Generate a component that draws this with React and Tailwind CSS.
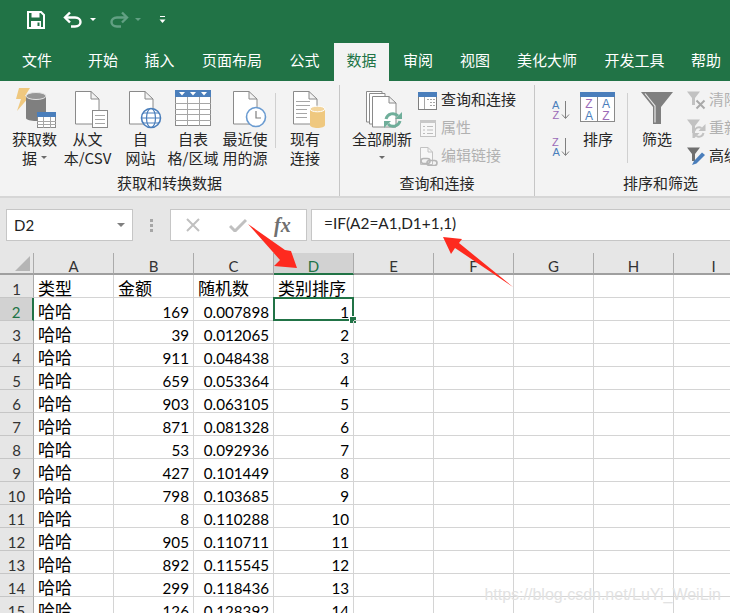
import React from 'react';

const BLUE = '#4a7ebb';

const rows = [
    ['169', '0.007898', '1'],
    ['39', '0.012065', '2'],
    ['911', '0.048438', '3'],
    ['659', '0.053364', '4'],
    ['903', '0.063105', '5'],
    ['871', '0.081328', '6'],
    ['53', '0.092936', '7'],
    ['427', '0.101449', '8'],
    ['798', '0.103685', '9'],
    ['8', '0.110288', '10'],
    ['905', '0.110711', '11'],
    ['892', '0.115545', '12'],
    ['299', '0.118436', '13'],
    ['126', '0.128392', '14'],
];

const tabs = [
    ['文件', 'w-[56px] ml-[9px]'],
    ['开始', 'w-[56px] ml-[10px]'],
    ['插入', 'w-[57px]'],
    ['页面布局', 'w-[88px]'],
    ['公式', 'w-[57px]'],
    ['数据', 'w-[55px] ml-[1px] bg-[#f3f3f3] text-[#217346]'],
    ['审阅', 'w-[58px]'],
    ['视图', 'w-[56px]'],
    ['美化大师', 'w-[88px]'],
    ['开发工具', 'w-[87px]'],
    ['帮助', 'w-[56px]'],
];

// white page with folded corner, x/y are the top left
const Doc = ({ x, y, w = 24, h = 33, fold = 8 }) => (
    <path
        d={`M${x + 0.5} ${y + 0.5}H${x + w - fold}L${x + w} ${y + fold}V${y + h}H${x + 0.5}ZM${x + w - fold} ${y + 0.5}V${y + fold}H${x + w}`}
        fill="#fff"
        stroke="#8a8a8a"
    />
);

const MiniTable = ({ x, y, w, h, head = 5, color = BLUE, cols = 3, lines = 3 }) => (
    <g>
        <rect x={x + 0.5} y={y + 0.5} width={w - 1} height={h - 1} fill="#fff" stroke="#8a8a8a" />
        <rect x={x} y={y} width={w} height={head} fill={color} />
        {Array.from({ length: cols - 1 }, (_, i) => (
            <path key={i} d={`M${x + Math.round(((i + 1) * w) / cols) + 0.5} ${y + head}V${y + h}`} stroke="#a6a6a6" />
        ))}
        {Array.from({ length: lines - 1 }, (_, i) => (
            <path key={i} d={`M${x} ${y + head + Math.round(((i + 1) * (h - head)) / lines) + 0.5}H${x + w}`} stroke="#a6a6a6" />
        ))}
    </g>
);

const Svg44 = ({ children }) => (
    <svg width="44" height="44" viewBox="0 0 44 44">
        {children}
    </svg>
);

const GetDataIcon = () => (
    <Svg44>
        <path d="M6 2H17L12 10H17L4 25L8 13H3Z" fill="#efc87f" />
        <path d="M13 10V32C13 36 33 36 33 32V10Z" fill="#7f7f7f" />
        <ellipse cx="23" cy="10" rx="10" ry="3.5" fill="#969696" stroke="#e6e6e6" />
        <MiniTable x={24} y={26} w={19} h={16} head={5} cols={3} lines={3} />
    </Svg44>
);

const TextDocIcon = () => (
    <Svg44>
        <Doc x={9} y={5} />
        <rect x="26.5" y="24.5" width="15" height="17" fill="#fff" stroke="#8a8a8a" />
        <path d="M29 29.5H39M29 33.5H39M29 37.5H39" stroke="#a6a6a6" />
    </Svg44>
);

const WebIcon = () => (
    <Svg44>
        <Doc x={10} y={5} />
        <circle cx="32" cy="32" r="9.5" fill="#fff" stroke={BLUE} strokeWidth="1.6" />
        <ellipse cx="32" cy="32" rx="4.5" ry="9.5" fill="none" stroke={BLUE} strokeWidth="1.2" />
        <path d="M22.5 32H41.5M24 27H40M24 37H40" stroke={BLUE} strokeWidth="1.2" />
    </Svg44>
);

const TableIcon = () => (
    <Svg44>
        <MiniTable x={4} y={4} w={36} h={36} head={7} cols={3} lines={5} />
        <path d="M8 6H14L11 9.5ZM19 6H25L22 9.5ZM30 6H36L33 9.5Z" fill="#fff" />
    </Svg44>
);

const RecentIcon = () => (
    <Svg44>
        <Doc x={10} y={5} />
        <circle cx="33" cy="31" r="9.5" fill="#fff" stroke="#6a9bd1" strokeWidth="1.6" />
        <path d="M33 25V32H38" fill="none" stroke="#7f7f7f" strokeWidth="1.2" />
    </Svg44>
);

const ExistingIcon = () => (
    <Svg44>
        <Doc x={10} y={5} />
        <path d="M13 15.5H27M13 19.5H27M13 23.5H24M13 27.5H24M13 31.5H24" stroke="#a6a6a6" />
        <path d="M27 23V39C27 43 42 43 42 39V23Z" fill="#efc87f" />
        <ellipse cx="34.5" cy="23" rx="7.5" ry="2.8" fill="#f3d59c" stroke="#fff" />
    </Svg44>
);

const RefreshArrows = ({ cx, cy, color, r = 7 }) => (
    <g fill="none" stroke={color} strokeWidth={r > 6 ? 3 : 2}>
        <path d={`M${cx - r} ${cy - 1}A${r} ${r} 0 0 1 ${cx + r - 2} ${cy - 4}`} />
        <path d={`M${cx + r} ${cy + 1}A${r} ${r} 0 0 1 ${cx - r + 2} ${cy + 4}`} />
        <path d={`M${cx + r + 2} ${cy - 8}V${cy - 1}H${cx + r - 5}Z`} fill={color} stroke="none" />
        <path d={`M${cx - r - 2} ${cy + 8}V${cy + 1}H${cx - r + 5}Z`} fill={color} stroke="none" />
    </g>
);

const RefreshAllIcon = () => (
    <Svg44>
        <path d="M6.5 5.5H22V36H6.5Z" fill="#fff" stroke="#8a8a8a" />
        <path d="M9.5 7.5H25V38H9.5Z" fill="#fff" stroke="#8a8a8a" />
        <Doc x={12} y={10} w={24} h={31} fold={7} />
        <RefreshArrows cx={33} cy={34} color="#6fae9a" r={7} />
    </Svg44>
);

const SmallSvg = ({ children }) => (
    <svg width="20" height="20" viewBox="0 0 20 20" className="shrink-0">
        {children}
    </svg>
);

const QueryIcon = () => (
    <SmallSvg>
        <rect x="0.5" y="2.5" width="18" height="17" fill="#fff" stroke="#7f7f7f" />
        <rect x="0" y="2" width="19" height="5" fill={BLUE} />
        <path d="M9 9.5H17M12 12.5H17M12 15.5H17" stroke="#a6a6a6" strokeDasharray="2 1" />
        <path d="M6.5 7V19" stroke="#a6a6a6" />
    </SmallSvg>
);

const PropsIcon = () => (
    <SmallSvg>
        <rect x="2.5" y="2.5" width="15" height="16" fill="#f7f7f7" stroke="#c2c2c2" />
        <rect x="2" y="2" width="16" height="3" fill="#c8c8c8" />
        <path d="M5 8.5H7M5 12H7M5 15.5H7M9 8.5H15M9 12H15M9 15.5H15" stroke="#bdbdbd" />
    </SmallSvg>
);

const EditLinkIcon = () => (
    <SmallSvg>
        <path d="M2.5 1.5H10L14.5 6V18.5H2.5Z" fill="#f7f7f7" stroke="#c2c2c2" />
        <path d="M10 1.5V6H14.5" fill="none" stroke="#c2c2c2" />
        <rect x="3" y="12.5" width="9" height="5" rx="2.5" fill="#f3f3f3" stroke="#b5b5b5" strokeWidth="1.6" />
        <rect x="9" y="14.5" width="10" height="5" rx="2.5" fill="none" stroke="#b5b5b5" strokeWidth="1.6" />
    </SmallSvg>
);

const SortSmall = ({ top, bottom, topColor, bottomColor }) => (
    <svg width="18" height="20" viewBox="0 0 18 20">
        <text x="0" y="9" fontSize="11" fontWeight="500" fontFamily="Liberation Sans" fill={topColor}>{top}</text>
        <text x="0.5" y="19" fontSize="11" fontWeight="500" fontFamily="Liberation Sans" fill={bottomColor}>{bottom}</text>
        <path d="M13.5 1V18M10 14.5L13.5 18.5L17 14.5" fill="none" stroke="#7f7f7f" />
    </svg>
);

const SortIcon = () => (
    <Svg44>
        <rect x="4.5" y="6.5" width="34" height="29" fill="#fff" stroke="#8a8a8a" />
        <rect x="4" y="6" width="35" height="5" fill={BLUE} />
        <path d="M21.5 11V36" stroke="#8a8a8a" />
        <g fontSize="12" fontFamily="Liberation Sans" textAnchor="middle">
            <text x="13" y="22" fill="#9b6bb8">Z</text>
            <text x="13" y="33.5" fill={BLUE}>A</text>
            <text x="30" y="22" fill={BLUE}>A</text>
            <text x="30" y="33.5" fill="#9b6bb8">Z</text>
        </g>
    </Svg44>
);

const FilterIcon = () => (
    <Svg44>
        <path d="M6 6H38L26 21V38H18V21Z" fill="#7f7f7f" />
        <path d="M10 7.5L20 20V36.5" fill="none" stroke="#e8e8e8" strokeWidth="1.2" />
    </Svg44>
);

const SmallFunnel = ({ color }) => (
    <path d="M1 1.5H14L9 8V15H6V8Z" fill={color} />
);

const ClearIcon = () => (
    <SmallSvg>
        <SmallFunnel color="#c2c2c2" />
        <path d="M10.5 10.5L18.5 18.5M18.5 10.5L10.5 18.5" stroke="#a9a9a9" strokeWidth="2" />
    </SmallSvg>
);

const ReapplyIcon = () => (
    <SmallSvg>
        <SmallFunnel color="#c2c2c2" />
        <RefreshArrows cx={13} cy={14} color="#c2c2c2" r={4.5} />
    </SmallSvg>
);

const AdvancedIcon = () => (
    <SmallSvg>
        <SmallFunnel color="#6f6f6f" />
        <path d="M6 19L8 15L16 6.5L19 9L10.5 17.5Z" fill={BLUE} />
    </SmallSvg>
);

const Caret = ({ className = '' }) => (
    <span className={`inline-block w-0 h-0 border-x-[3px] border-x-transparent border-t-[3px] border-t-[#6a6a6a] ${className}`} />
);

const BigButton = ({ icon, first, second, width, caret }) => (
    <div className={`flex flex-col items-center shrink-0 ${width}`}>
        <div className="h-[44px] w-[44px]">{icon}</div>
        <div className="whitespace-nowrap -mt-[1px]">{first}</div>
        <div className="h-[19px] flex items-center gap-[4px] whitespace-nowrap">
            {second}
            {caret && <Caret />}
        </div>
    </div>
);

const SmallButton = ({ icon, label, disabled }) => (
    <div className={`h-[28px] flex items-center gap-[3px] whitespace-nowrap ${disabled ? 'text-[#b1b1b1]' : ''}`}>
        {icon}
        <span className="-mt-[3px]">{label}</span>
    </div>
);

const Group = ({ label, width, border = true, children }) => (
    <div className={`flex flex-col shrink-0 h-[111px] mt-[4px] ${width} ${border ? 'border-r border-[#c6c6c6]' : ''}`}>
        <div className="h-[88px] flex pt-[1px]">{children}</div>
        <div className="text-center leading-[19px]">{label}</div>
    </div>
);

const Ribbon = () => (
    <div className="h-[117px] bg-[#f3f3f3] border-b-2 border-[#d6d6d6] flex text-[15px] leading-[19px] text-[#262626]">
        <Group label="获取和转换数据" width="w-[340px]">
            <div className="w-[8px] shrink-0" />
            <BigButton width="w-[53px]" icon={<GetDataIcon />} first="获取数" second="据" caret />
            <BigButton width="w-[53px]" icon={<TextDocIcon />} first="从文" second="本/CSV" />
            <BigButton width="w-[53px]" icon={<WebIcon />} first="自" second="网站" />
            <BigButton width="w-[52px]" icon={<TableIcon />} first="自表" second="格/区域" />
            <BigButton width="w-[52px]" icon={<RecentIcon />} first="最近使" second="用的源" />
            <div className="w-px h-[55px] mt-[7px] ml-[4px] bg-[#d0d0d0] shrink-0" />
            <BigButton width="w-[58px]" icon={<ExistingIcon />} first="现有" second="连接" />
        </Group>
        <Group label="查询和连接" width="w-[195px]">
            <div className="w-[4px] shrink-0" />
            <BigButton width="w-[76px]" icon={<RefreshAllIcon />} first="全部刷新" second="" caret />
            <div className="flex flex-col -ml-[2px]">
                <SmallButton icon={<QueryIcon />} label="查询和连接" />
                <SmallButton icon={<PropsIcon />} label="属性" disabled />
                <SmallButton icon={<EditLinkIcon />} label="编辑链接" disabled />
            </div>
        </Group>
        <Group label="排序和筛选" width="w-[251px]" border={false}>
            <div className="w-[17px] shrink-0" />
            <div className="w-[19px] shrink-0 flex flex-col pt-[14px] gap-[17px]">
                <SortSmall top="A" bottom="Z" topColor={BLUE} bottomColor="#9b6bb8" />
                <SortSmall top="Z" bottom="A" topColor="#9b6bb8" bottomColor={BLUE} />
            </div>
            <BigButton width="w-[54px]" icon={<SortIcon />} first="排序" second="" />
            <div className="w-px h-[70px] mt-[7px] ml-[2px] bg-[#d0d0d0] shrink-0" />
            <BigButton width="w-[58px]" icon={<FilterIcon />} first="筛选" second="" />
            <div className="flex flex-col">
                <SmallButton icon={<ClearIcon />} label="清除" disabled />
                <SmallButton icon={<ReapplyIcon />} label="重新应用" disabled />
                <SmallButton icon={<AdvancedIcon />} label="高级" />
            </div>
        </Group>
    </div>
);

const TitleBar = () => (
    <div className="h-[81px] bg-[#217346] text-white flex flex-col">
        <div className="h-[43px] flex items-center pl-[27px] pb-[4px]">
            <svg width="18" height="18" viewBox="0 0 18 18">
                <path d="M1 1H14L17 4V17H1Z" fill="none" stroke="#fff" strokeWidth="2" />
                <path d="M4.5 1.5H12.5V6.5H4.5Z" fill="#fff" />
                <path d="M4 10H14V16H4Z" fill="#fff" />
                <path d="M10.5 11.5H12.5V15H10.5Z" fill="#217346" />
            </svg>
            <svg width="20" height="18" viewBox="0 0 20 18" className="ml-[18px]">
                <path d="M2 6.5H12C15.5 6.5 17.5 8.5 17.5 11C17.5 13.5 15.5 15.5 12 15.5H8" fill="none" stroke="#fff" strokeWidth="2.4" />
                <path d="M7 1.5L2 6.5L7 11.5" fill="none" stroke="#fff" strokeWidth="2.4" />
            </svg>
            <span className="ml-[7px] w-0 h-0 border-x-[3px] border-x-transparent border-t-[3px] border-t-white" />
            <svg width="20" height="18" viewBox="0 0 20 18" className="ml-[13px]">
                <path d="M18 6.5H8C4.5 6.5 2.5 8.5 2.5 11C2.5 13.5 4.5 15.5 8 15.5H12" fill="none" stroke="#62a083" strokeWidth="2.4" />
                <path d="M13 1.5L18 6.5L13 11.5" fill="none" stroke="#62a083" strokeWidth="2.4" />
            </svg>
            <span className="ml-[6px] w-0 h-0 border-x-[3px] border-x-transparent border-t-[3px] border-t-[#62a083]" />
            <svg width="7" height="8" viewBox="0 0 7 8" className="ml-[18px]">
                <path d="M1 0.5H6" stroke="#fff" />
                <path d="M0.5 3.5H6.5L3.5 7Z" fill="#fff" />
            </svg>
        </div>
        <div className="h-[38px] flex text-[15px] leading-[34px]">
            {tabs.map(([label, cls]) => (
                <div key={label} className={`text-center shrink-0 ${cls}`}>{label}</div>
            ))}
        </div>
    </div>
);

const FormulaBar = () => (
    <div className="h-[55px] bg-[#e6e6e6] flex items-start pt-[11px] pl-[6px] text-[15px] font-['Lato','Noto_Sans_CJK_SC',sans-serif] text-[#222]">
        <div className="w-[127px] h-[32px] bg-white border border-[#c6c6c6] flex items-center justify-between pl-[7px] pr-[7px]">
            <span>D2</span>
            <span className="w-0 h-0 border-x-[4px] border-x-transparent border-t-[4px] border-t-[#7f7f7f]" />
        </div>
        <div className="w-[37px] h-[32px] flex flex-col items-center justify-center gap-[2px] pr-[1px]">
            <span className="w-[3px] h-[3px] bg-[#a6a6a6]" />
            <span className="w-[3px] h-[3px] bg-[#a6a6a6]" />
            <span className="w-[3px] h-[3px] bg-[#a6a6a6]" />
        </div>
        <div className="w-[137px] h-[32px] bg-white border border-[#c6c6c6] flex items-center">
            <svg width="14" height="14" viewBox="0 0 14 14" className="ml-[15px]">
                <path d="M1 1L13 13M13 1L1 13" stroke="#c0c0c0" strokeWidth="2" />
            </svg>
            <svg width="18" height="14" viewBox="0 0 18 14" className="ml-[29px]">
                <path d="M1 8L6 13L17 2" fill="none" stroke="#c0c0c0" strokeWidth="3" />
            </svg>
            <span className="ml-[27px] font-['Liberation_Serif',serif] italic font-bold text-[20px] text-[#6f6f6f]">fx</span>
        </div>
        <div className="ml-[4px] flex-1 h-[32px] bg-white border border-[#c6c6c6] border-r-0 flex items-center pl-[12px] pb-[2px] text-[15.4px] text-[#222]">
            =IF(A2=A1,D1+1,1)
        </div>
    </div>
);

const ColumnHeader = () => (
    <div className="h-[22px] flex bg-[#e6e6e6] text-[15px] leading-[26px] text-[#333]">
        <div className="w-[34px] shrink-0 border-r border-[#ababab] border-b-2 border-b-[#9f9f9f] flex items-end justify-end pr-[3px] pb-[2px]">
            <span className="w-0 h-0 border-l-[15px] border-l-transparent border-b-[15px] border-b-[#b5b5b5]" />
        </div>
        {['A', 'B', 'C', 'D', 'E', 'F', 'G', 'H', 'I'].map((c) => (
            <div
                key={c}
                className={`w-[80px] shrink-0 text-center border-r border-[#ababab] border-b-2 ${c === 'D' ? 'bg-[#d2d2d2] text-[#217346] border-b-[#217346]' : 'border-b-[#9f9f9f]'}`}
            >
                {c}
            </div>
        ))}
    </div>
);

const Cell = ({ children, align = 'right', cjk, selected }) => (
    <div
        className={`relative w-[80px] h-[23px] shrink-0 border-r border-b border-[#d4d4d4] flex items-end leading-[16px] text-black ${align === 'right' ? 'justify-end pr-[4px]' : 'justify-start pl-[4px]'} ${cjk ? 'text-[17px]' : 'text-[15.2px]'}`}
    >
        {children}
        {selected && (
            <div className="absolute -left-[1px] -top-[1px] -right-[1px] -bottom-[1px] border-2 border-[#217346]">
                <span className="absolute -right-[5px] -bottom-[5px] w-[8px] h-[8px] bg-[#217346] border border-white" />
            </div>
        )}
    </div>
);

const SheetRow = ({ num, cells, header }) => {
    const active = num === 2;
    return (
        <div className="flex">
            <div
                className={`w-[34px] h-[23px] shrink-0 flex items-end justify-center leading-[16px] text-[15px] border-b border-[#c6c6c6] border-r ${active ? 'bg-[#d2d2d2] text-[#217346] border-r-2 border-r-[#217346]' : 'bg-[#e6e6e6] text-[#333] border-r-[#ababab]'}`}
            >
                {num}
            </div>
            <Cell align="left" cjk>{header ? '类型' : '哈哈'}</Cell>
            <Cell align={header ? 'left' : 'right'} cjk={header}>{cells[0]}</Cell>
            <Cell align={header ? 'left' : 'right'} cjk={header}>{cells[1]}</Cell>
            <Cell align={header ? 'left' : 'right'} cjk={header} selected={active}>{cells[2]}</Cell>
            <Cell /><Cell /><Cell /><Cell /><Cell />
        </div>
    );
};

const Arrows = () => (
    <svg width="730" height="613" viewBox="0 0 730 613" className="absolute left-0 top-0 pointer-events-none">
        <path d="M248 224L285 250L291 251L297 268L274 266L280 260Z" fill="#fe2a1f" />
        <path d="M513 287L459 243L462 239L443 237L451 254L455 248Z" fill="#fe2a1f" />
    </svg>
);

function App() {
    return (
        <div className="relative w-[730px] h-[613px] overflow-hidden bg-white font-['Noto_Sans_CJK_SC',sans-serif]">
            <TitleBar />
            <Ribbon />
            <FormulaBar />
            <div className="font-['Lato','Noto_Sans_CJK_SC',sans-serif]">
                <ColumnHeader />
                <SheetRow num={1} header cells={['金额', '随机数', '类别排序']} />
                {rows.map((cells, i) => (
                    <SheetRow key={i} num={i + 2} cells={cells} />
                ))}
            </div>
            <Arrows />
            <div className="absolute right-[9px] bottom-[9px] text-[16px] leading-[18px] text-[#e2e2e2] font-['Liberation_Sans',sans-serif]">
                https://blog.csdn.net/LuYi_WeiLin
            </div>
        </div>
    );
}

export default App;
